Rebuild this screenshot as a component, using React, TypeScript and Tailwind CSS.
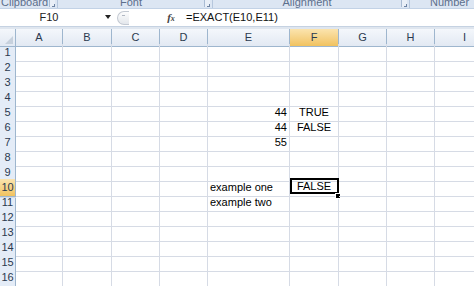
import React from 'react';

const cols = ['A', 'B', 'C', 'D', 'E', 'F', 'G', 'H', 'I'];
const rows = Array.from({ length: 17 }, (_, i) => i + 1);

type Cell = { text: string; align: 'left' | 'right' | 'center' };

const data: Record<string, Cell> = {
  E5: { text: '44', align: 'right' },
  F5: { text: 'TRUE', align: 'center' },
  E6: { text: '44', align: 'right' },
  F6: { text: 'FALSE', align: 'center' },
  E7: { text: '55', align: 'right' },
  E10: { text: 'example one', align: 'left' },
  F10: { text: 'FALSE', align: 'center' },
  E11: { text: 'example two', align: 'left' },
};

const gridCols = 'grid grid-cols-[16px_47px_49px_48px_48px_82px_49px_48px_48px_60px]';

function RibbonGroup({ label, width, launcher = true, center = true }: { label: string; width: string; launcher?: boolean; center?: boolean }) {
  return (
    <div className={`${width} h-full flex items-end border-r border-[#b6c7dd] shrink-0`}>
      <div className={`flex-1 leading-[11px] text-[11px] text-[#5c6f8c] ${center ? 'text-center' : 'pl-[1px]'} whitespace-nowrap`}>{label}</div>
      {launcher && (
        <div className="w-[6px] h-[7px] mr-[2px] mb-[1px] border-l border-[#a9bbd3] bg-[#e9eff7] flex items-end justify-end">
          <div className="w-[3px] h-[3px] border-r border-b border-[#6f84a3]" />
        </div>
      )}
    </div>
  );
}

export default function App() {
  return (
    <div className="w-[474px] h-[286px] overflow-hidden bg-white" style={{ fontFamily: '"Liberation Sans", Arial, sans-serif' }}>
      {/* ribbon bottom strip */}
      <div className="h-[9px] flex overflow-hidden bg-[#dce6f3] border-b border-[#c2d2e6]">
        <RibbonGroup label="Clipboard" width="w-[58px]" center={false} />
        <RibbonGroup label="Font" width="w-[155px]" />
        <RibbonGroup label="Alignment" width="w-[197px]" />
        <RibbonGroup label="Number" width="w-[80px]" launcher={false} />
      </div>

      {/* formula bar */}
      <div className="h-[18px] flex items-center bg-white border-b border-[#c5d2e2]">
        <div className="w-[112px] h-full flex items-center relative">
          <div className="flex-1 text-center text-[11px] text-[#222] pr-[14px]">F10</div>
          <span className="absolute right-[1px] top-[6px] w-0 h-0 border-l-[3px] border-r-[3px] border-t-[4px] border-l-transparent border-r-transparent border-t-[#222]" />
        </div>
        <div className="w-[48px] h-full flex items-center pl-[5px]">
          <div className="w-[12px] h-[14px] rounded-l-full border border-r-0 border-[#c3c9d2] bg-gradient-to-b from-[#fdfdfd] to-[#e3e7ec] flex items-start justify-center pt-[3px]">
            <div className="w-[3px] h-[1px] bg-[#b0b7c2]" />
          </div>
        </div>
        <div className="w-[22px] h-full flex items-center justify-center">
          <span className="text-[11px] italic font-bold text-[#444]" style={{ fontFamily: '"Liberation Serif", serif' }}>
            f<span className="text-[8px]">x</span>
          </span>
        </div>
        <div className="flex-1 h-full flex items-center pl-[4px] text-[11px] text-[#111]">=EXACT(E10,E11)</div>
      </div>

      <div className="h-[2px] bg-[#dfe6ef]" />

      {/* column headers */}
      <div className={`${gridCols} h-[15px]`}>
        <div className="relative bg-gradient-to-b from-[#f4f7fb] to-[#e2e9f3] border-r border-b border-[#9eb6ce]">
          <span className="absolute right-[2px] bottom-[2px] w-0 h-0 border-b-[8px] border-l-[8px] border-b-[#c7d1dd] border-l-transparent" />
        </div>
        {cols.map((c) => (
          <div
            key={c}
            className={`flex items-center justify-center text-[11px] text-[#2b3a4f] border-r border-b border-[#9eb6ce] ${
              c === 'F' ? 'bg-gradient-to-b from-[#fbe4ae] to-[#f1c25e]' : 'bg-gradient-to-b from-[#f4f7fb] to-[#e2e9f3]'
            }`}
          >
            {c}
          </div>
        ))}
        <div className="bg-gradient-to-b from-[#f4f7fb] to-[#e2e9f3] border-b border-[#9eb6ce]" />
      </div>

      {/* rows */}
      {rows.map((r) => (
        <div key={r} className={`${gridCols} h-[15px] ${r === 10 ? 'relative z-10' : ''}`}>
          <div
            className={`flex items-center justify-center text-[11px] text-[#2b3a4f] border-r border-b border-[#9eb6ce] ${
              r === 10 ? 'bg-gradient-to-b from-[#fbe4ae] to-[#f1c25e]' : 'bg-[#e4ecf7]'
            }`}
          >
            {r}
          </div>
          {cols.map((c) => {
            const cell = data[`${c}${r}`];
            const selected = c === 'F' && r === 10;
            return (
              <div
                key={c}
                className={`relative flex items-center px-[2px] text-[11px] leading-[13px] text-black whitespace-nowrap border-r border-b border-[#d6dbe5] ${
                  selected ? 'pb-[1px]' : 'pt-[1px]'
                } ${cell?.align === 'right' ? 'justify-end' : cell?.align === 'center' ? 'justify-center' : 'justify-start'}`}
              >
                {cell?.text}
                {selected && (
                  <>
                    <span className="absolute left-0 -top-[1px] w-[49px] h-[16px] border-2 border-black pointer-events-none" />
                    <span className="absolute -right-[3px] -bottom-[3px] w-[6px] h-[6px] bg-black border border-white" />
                  </>
                )}
              </div>
            );
          })}
          <div className="border-b border-[#d6dbe5]" />
        </div>
      ))}
    </div>
  );
}
